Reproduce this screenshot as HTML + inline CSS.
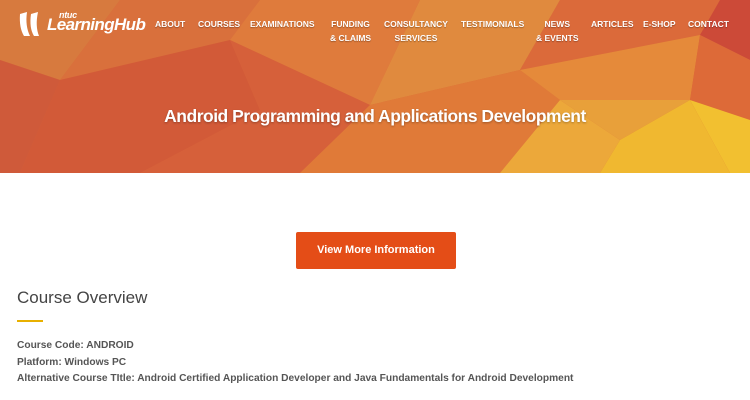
<!DOCTYPE html>
<html><head><meta charset="utf-8"><style>
*{margin:0;padding:0;box-sizing:border-box}
body{width:750px;height:400px;overflow:hidden;background:#fff;font-family:"Liberation Sans",sans-serif;position:relative}
.hero{position:absolute;left:0;top:0;width:750px;height:173px;overflow:hidden}
.hero svg{position:absolute;left:0;top:0}
.nav{position:absolute;top:17px;color:#fff;font-size:8.5px;font-weight:bold;text-align:center;line-height:14px;text-shadow:0 1px 1px rgba(0,0,0,.3)}
.logo{position:absolute;left:16px;top:8px;color:#fff}
h1{position:absolute;top:106px;left:0;width:750px;text-align:center;color:#fff;font-size:17.5px;font-weight:bold;letter-spacing:-0.5px;text-shadow:0 1px 2px rgba(0,0,0,.3)}
.btn{position:absolute;left:296px;top:232px;width:160px;height:37px;background:#e44d17;border-radius:2px;color:#fff;font-size:11px;font-weight:bold;text-align:center;line-height:37px}
h2{position:absolute;left:17px;top:288px;font-size:17px;font-weight:normal;color:#444}
.bar{position:absolute;left:17px;top:320px;width:26px;height:2px;background:#e8b000}
.info{position:absolute;left:17px;top:338px;font-size:10.2px;font-weight:bold;color:#555;line-height:16.5px}
</style></head><body>
<div class="hero">
<svg width="750" height="173" viewBox="0 0 750 173">
<rect width="750" height="173" fill="#d86a3a"/>
<polygon points="0,0 120,0 60,80 0,60" fill="#d77a3e"/>
<polygon points="120,0 260,0 230,40 60,80" fill="#d9703c"/>
<polygon points="260,0 420,0 370,105 230,40" fill="#df7b3c"/>
<polygon points="420,0 560,0 520,70 370,105" fill="#e08a3e"/>
<polygon points="560,0 720,0 700,35 520,70" fill="#db6a3a"/>
<polygon points="720,0 750,0 750,60 700,35" fill="#cc4a38"/>
<polygon points="0,60 60,80 20,173 0,173" fill="#cf5a3a"/>
<polygon points="60,80 230,40 260,110 140,173 20,173" fill="#d25a38"/>
<polygon points="230,40 370,105 300,173 140,173 260,110" fill="#d6603a"/>
<polygon points="370,105 520,70 560,100 500,173 300,173" fill="#e07a38"/>
<polygon points="520,70 700,35 690,100 560,100" fill="#e58a3a"/>
<polygon points="700,35 750,60 750,173 730,173 690,100" fill="#dd6a38"/>
<polygon points="560,100 690,100 620,140" fill="#e8a03a"/>
<polygon points="500,173 560,100 620,140 600,173" fill="#eca83a"/>
<polygon points="600,173 620,140 690,100 730,173" fill="#f0b830"/>
<polygon points="690,100 730,173 750,173 750,120" fill="#f2c030"/>
</svg>
<div class="logo">
<svg width="32" height="28" viewBox="0 0 32 28" style="position:absolute;left:0;top:2px"><path d="M4 4 Q3 18 8 26 L14 26 Q9 16 11 2 Z" fill="#fff"/><path d="M15 4 Q13 18 18 26 L23 26 Q19 16 22 2 Z" fill="#fff"/></svg>
<div style="position:absolute;left:43px;top:2px;font-size:9px;font-weight:bold;font-style:italic;letter-spacing:-0.3px">ntuc</div>
<div style="position:absolute;left:31px;top:7px;font-size:17px;font-weight:bold;font-style:italic;letter-spacing:-0.6px;white-space:nowrap">LearningHub</div>
</div>
<div class="nav" style="left:155px">ABOUT</div>
<div class="nav" style="left:198px">COURSES</div>
<div class="nav" style="left:250px">EXAMINATIONS</div>
<div class="nav" style="left:330px">FUNDING<br>&amp; CLAIMS</div>
<div class="nav" style="left:384px">CONSULTANCY<br>SERVICES</div>
<div class="nav" style="left:461px">TESTIMONIALS</div>
<div class="nav" style="left:536px">NEWS<br>&amp; EVENTS</div>
<div class="nav" style="left:591px">ARTICLES</div>
<div class="nav" style="left:643px">E-SHOP</div>
<div class="nav" style="left:688px">CONTACT</div>
<h1>Android Programming and Applications Development</h1>
</div>
<div class="btn">View More Information</div>
<h2>Course Overview</h2>
<div class="bar"></div>
<div class="info">Course Code: ANDROID<br>Platform: Windows PC<br>Alternative Course TItle: Android Certified Application Developer and Java Fundamentals for Android Development</div>
</body></html>
